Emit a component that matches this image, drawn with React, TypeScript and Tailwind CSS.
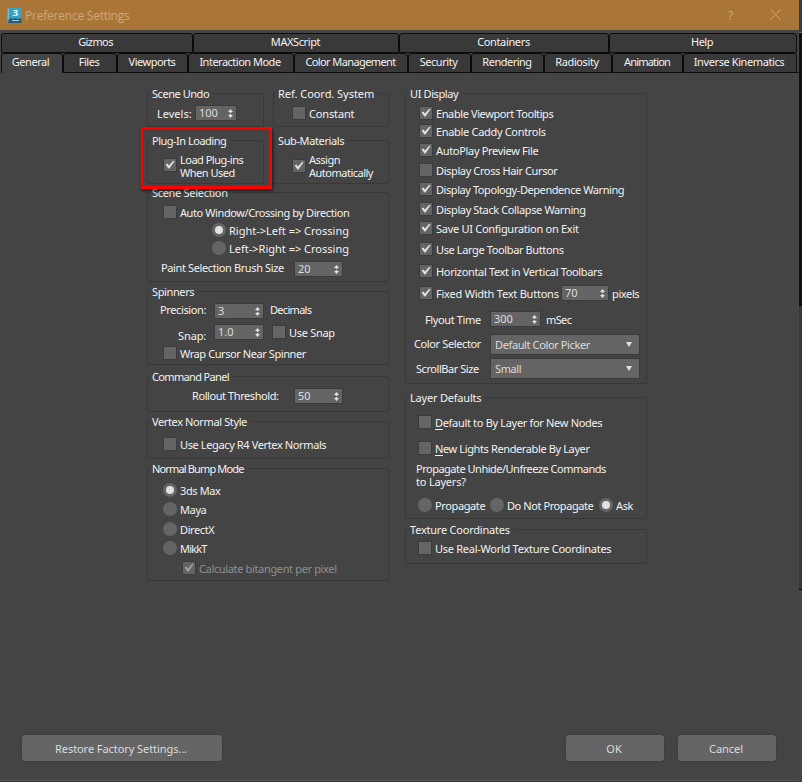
import type { ReactNode } from "react";

const TopTabs = [
    { name: "Gizmos", width: "w-[192px]", fit: "pr-[3px] tracking-[-0.6px]" },
    { name: "MAXScript", width: "w-[206px]", fit: "pr-[1px] tracking-[-0.4px]" },
    { name: "Containers", width: "w-[210px]", fit: "pr-[1px] tracking-[-0.35px]" },
    { name: "Help", width: "w-[188px]", fit: "pr-[2px] tracking-[-0.5px]" },
];

const BottomTabs = [
    { name: "General", width: "w-[62px]", fit: "pr-[3px] tracking-[-0.43px]" },
    { name: "Files", width: "w-[54px]", fit: "pr-[2px] tracking-[-0.5px]" },
    { name: "Viewports", width: "w-[71px]", fit: "pr-[1px] tracking-[-0.5px]" },
    { name: "Interaction Mode", width: "w-[106px]", fit: "pr-[2px] tracking-[-0.5px]" },
    { name: "Color Management", width: "w-[114px]", fit: "pr-[1px] tracking-[-0.6px]" },
    { name: "Security", width: "w-[63px]", fit: "pr-[2px] tracking-[-0.45px]" },
    { name: "Rendering", width: "w-[73px]", fit: "pr-[1px] tracking-[-0.5px]" },
    { name: "Radiosity", width: "w-[68px]", fit: "pr-[2px] tracking-[-0.4px]" },
    { name: "Animation", width: "w-[71px]", fit: "pr-[1px] tracking-[-0.8px]" },
    { name: "Inverse Kinematics", width: "w-[114px]", fit: "pr-[2px] tracking-[-0.4px]" },
];

type TabProps = { name: string; width: string; fit: string; active?: boolean };

const Tab = ({ name, width, fit, active }: TabProps) => (
    <button
        className={`${width} ${fit} shrink-0 border-t border-x border-[#0c0c0c] rounded-t-[3px] text-center ${active ? "pb-[3px] bg-[#444444]" : "pb-[2px] bg-[#393939] border-b"}`}
    >
        {name}
    </button>
);

type GroupProps = { title: string; fit?: string; className: string; children: ReactNode };

const Group = ({ title, fit = "", className, children }: GroupProps) => (
    <section className={`flex flex-col border border-[#383838] rounded-[2px] ${className}`}>
        <h2 className={`-mt-2 ml-[2px] h-4 w-fit pl-[2px] pr-1 leading-4 bg-[#444444] ${fit}`}>{title}</h2>
        {children}
    </section>
);

const Row = ({ className = "", children }: { className?: string; children: ReactNode }) => (
    <div className={`flex items-center h-4 ${className}`}>{children}</div>
);

// row text sits a pixel below the centre of its control
const Label = ({ className = "", children }: { className?: string; children: ReactNode }) => (
    <span className={`pt-[2px] ${className}`}>{children}</span>
);

const Check = ({ on, dim, className = "" }: { on?: boolean; dim?: boolean; className?: string }) => (
    <span
        className={`w-[14px] h-[14px] shrink-0 mr-[3px] border border-[#3b3b3b] bg-[#646464] ${className}`}
    >
        {on && (
            <svg viewBox="0 0 12 12" className="w-3 h-3" fill={dim ? "#a0a0a0" : "#e0e0e0"}>
                <path d="M1.6 5.6 L3.4 4.6 L5 6.6 L9.2 1.8 L10.6 2.2 L5.4 9.6 L4.4 9.6 Z" />
            </svg>
        )}
    </span>
);

const Radio = ({ on }: { on?: boolean }) => (
    <span className="w-[14px] h-[14px] shrink-0 mr-[3px] rounded-full bg-[#656565] flex items-center justify-center">
        {on && <span className="w-2 h-2 rounded-full bg-[#e2e2e2]" />}
    </span>
);

const Spinner = ({ value, className }: { value: string; className: string }) => (
    <span
        className={`flex items-center justify-between shrink-0 h-4 pl-[3px] pr-[3px] border border-[#3b3b3b] bg-[#646464] text-[#dcdcdc] tracking-normal ${className}`}
    >
        {value}
        <svg viewBox="0 0 5 9" className="w-[5px] h-[9px]" fill="#e0e0e0">
            <path d="M2.5 0 L5 3 H3.2 V4 H1.8 V3 H0 Z M2.5 9 L5 6 H3.2 V5 H1.8 V6 H0 Z" />
        </svg>
    </span>
);

const Combo = ({ value }: { value: string }) => (
    <span className="flex items-center justify-between w-[150px] h-[21px] shrink-0 pl-1 pr-[7px] border border-[#3b3b3b] bg-[#646464] text-[#dcdcdc]">
        <Label>{value}</Label>
        <svg viewBox="0 0 6 5" className="w-[6px] h-[5px]" fill="#e0e0e0">
            <path d="M0 0 H6 L3 5 Z" />
        </svg>
    </span>
);

const PushButton = ({ label, className }: { label: string; className: string }) => (
    <button
        className={`h-[28px] rounded-[4px] border border-[#3e3e3e] bg-[#656565] text-[#dcdcdc] pt-px pr-[2px] tracking-[-0.07px] ${className}`}
    >
        {label}
    </button>
);

const AppIcon = () => (
    <svg viewBox="0 0 15 17" className="w-[15px] h-[17px]">
        <path d="M0.5 2 L3 0.5 V13 L0.5 15.5 Z" fill="#7fb9c8" />
        <rect x="2" y="0.5" width="12.5" height="12.5" rx="1" fill="#35a3c4" />
        <path d="M2 11.5 H14.5 V16 H1 Z" fill="#255c78" />
        <path d="M5 13.5 H12" stroke="#a9cbd6" />
        <text x="8.3" y="9" textAnchor="middle" fontSize="9.5" fontWeight="700" fill="#e9f7fa">
            3
        </text>
    </svg>
);

const TitleBar = () => (
    <header className="flex items-center h-[30px] shrink-0 pl-[7px] bg-[#a97638] text-[#cfa878] font-['Open_Sans',sans-serif]">
        <AppIcon />
        <h1 className="ml-[3px] pt-[2px] text-[12px] tracking-[-0.22px]">Preference Settings</h1>
        <span className="ml-auto mr-[37px] pb-px text-[13px]">?</span>
        <svg viewBox="0 0 11 11" className="w-[11px] h-[11px] mr-[18px] mb-[2px]" stroke="#cfa878">
            <path d="M0.5 0.5 L10.5 10.5 M10.5 0.5 L0.5 10.5" />
        </svg>
    </header>
);

const displayOptions = [
    { label: "Enable Viewport Tooltips", on: true, gap: "mt-[3px]", fit: "tracking-[-0.4px]" },
    { label: "Enable Caddy Controls", on: true, gap: "mt-[2px]", fit: "tracking-[-0.32px]" },
    { label: "AutoPlay Preview File", on: true, gap: "mt-[3px]", fit: "tracking-[-0.32px]" },
    { label: "Display Cross Hair Cursor", on: false, gap: "mt-[4px]", fit: "tracking-[-0.38px]" },
    { label: "Display Topology-Dependence Warning", on: true, gap: "mt-[3px]", fit: "tracking-[-0.43px]" },
    { label: "Display Stack Collapse Warning", on: true, gap: "mt-[4px]", fit: "tracking-[-0.38px]" },
    { label: "Save UI Configuration on Exit", on: true, gap: "mt-[3px]", fit: "tracking-[-0.28px]" },
    { label: "Use Large Toolbar Buttons", on: true, gap: "mt-[5px]", fit: "tracking-[-0.38px]" },
    { label: "Horizontal Text in Vertical Toolbars", on: true, gap: "mt-[6px]", fit: "tracking-[-0.34px]" },
];

const LeftColumn = () => (
    <div className="w-[242px] flex flex-col">
        <div className="flex justify-between">
            <Group title="Scene Undo" fit="tracking-[-0.45px]" className="w-[117px] h-[34px]">
                <Row className="mt-[3px] pl-[9px]">
                    <Label className="w-[38px] tracking-normal">Levels:</Label>
                    <Spinner value="100" className="w-[42px]" />
                </Row>
            </Group>
            <Group title="Ref. Coord. System" fit="tracking-[-0.04px]" className="w-[116px] h-[34px]">
                <Row className="mt-[3px] pl-[18px]">
                    <Check />
                    <Label className="tracking-[-0.15px]">Constant</Label>
                </Row>
            </Group>
        </div>
        <div className="flex justify-between mt-[13px]">
            <div className="relative">
                <Group title="Plug-In Loading" fit="tracking-[-0.5px]" className="w-[117px] h-[44px]">
                    <div className="flex items-center h-[26px] mt-[4px] pl-[15px] leading-[13px] tracking-[-0.5px]">
                        <Check on className="-mt-[2px]" />
                        <span>
                            Load Plug-ins
                            <br />
                            When Used
                        </span>
                    </div>
                </Group>
                {/* callout frame around the plug-in options */}
                <div className="absolute -left-[6px] -top-[13px] w-[131px] h-[62px] border-2 border-b-3 border-[#ff0000] shadow-[1px_2px_3px_rgba(0,0,0,0.6)]" />
            </div>
            <Group title="Sub-Materials" className="w-[116px] h-[44px]">
                <div className="flex items-center h-[26px] mt-[4px] pl-[18px] leading-[13px] tracking-[-0.5px]">
                    <Check on />
                    <span>
                        Assign
                        <br />
                        Automatically
                    </span>
                </div>
            </Group>
        </div>
        <Group title="Scene Selection" fit="tracking-[-0.3px]" className="mt-[8px] h-[90px]">
            <Row className="mt-[3px] pl-[15px]">
                <Check />
                <Label className="tracking-[-0.41px]">Auto Window/Crossing by Direction</Label>
            </Row>
            <Row className="mt-[2px] pl-[64px] tracking-normal">
                <Radio on />
                <Label>Right-&gt;Left =&gt; Crossing</Label>
            </Row>
            <Row className="mt-[2px] pl-[64px] tracking-normal">
                <Radio />
                <Label>Left-&gt;Right =&gt; Crossing</Label>
            </Row>
            <Row className="mt-[5px] pl-[13px]">
                <span className="w-[133px] pb-[2px]">Paint Selection Brush Size</span>
                <Spinner value="20" className="w-[49px]" />
            </Row>
        </Group>
        <Group title="Spinners" className="mt-[9px] h-[74px]">
            <Row className="mt-[3px] pl-[12px]">
                <span className="w-[54px] pb-[2px]">Precision:</span>
                <Spinner value="3" className="w-[50px]" />
                <span className="ml-[6px] pb-[2px] tracking-[-0.7px]">Decimals</span>
            </Row>
            <Row className="mt-[5px] pl-[30px]">
                <span className="w-[36px] pt-2 tracking-[-0.1px]">Snap:</span>
                <Spinner value="1.0" className="w-[50px]" />
                <Check className="ml-[8px]" />
                <Label className="tracking-[-0.3px]">Use Snap</Label>
            </Row>
            <Row className="mt-[5px] pl-[15px]">
                <Check />
                <Label className="tracking-[-0.42px]">Wrap Cursor Near Spinner</Label>
            </Row>
        </Group>
        <Group title="Command Panel" fit="tracking-[-0.65px]" className="mt-[11px] h-[36px]">
            <Row className="mt-[3px] pl-[44px]">
                <span className="w-[102px] tracking-[-0.42px]">Rollout Threshold:</span>
                <Spinner value="50" className="w-[49px]" />
            </Row>
        </Group>
        <Group title="Vertex Normal Style" className="mt-[9px] h-[38px]">
            <Row className="mt-[6px] pl-[15px]">
                <Check />
                <Label>Use Legacy R4 Vertex Normals</Label>
            </Row>
        </Group>
        <Group title="Normal Bump Mode" fit="tracking-[-0.85px]" className="mt-[9px] h-[113px]">
            <Row className="mt-[5px] pl-[15px]">
                <Radio on />
                <Label>3ds Max</Label>
            </Row>
            <Row className="mt-[3px] pl-[15px]">
                <Radio />
                <Label>Maya</Label>
            </Row>
            <Row className="mt-[4px] pl-[15px]">
                <Radio />
                <Label>DirectX</Label>
            </Row>
            <Row className="mt-[3px] pl-[15px]">
                <Radio />
                <Label className="tracking-[-0.8px]">MikkT</Label>
            </Row>
            <Row className="mt-[4px] pl-[34px] text-[#8f8f8f]">
                <Check on dim />
                <Label className="tracking-[-0.35px]">Calculate bitangent per pixel</Label>
            </Row>
        </Group>
    </div>
);

const RightColumn = () => (
    <div className="w-[242px] flex flex-col">
        <Group title="UI Display" className="h-[291px]">
            {displayOptions.map((option) => (
                <Row key={option.label} className={`pl-[13px] ${option.gap}`}>
                    <Check on={option.on} />
                    <Label className={option.fit}>{option.label}</Label>
                </Row>
            ))}
            <Row className="mt-[6px] pl-[13px]">
                <Check on />
                <Label className="w-[125px] tracking-[-0.22px]">Fixed Width Text Buttons</Label>
                <Spinner value="70" className="w-[48px]" />
                <Label className="ml-[3px]">pixels</Label>
            </Row>
            <Row className="mt-[10px] pl-[19px]">
                <Label className="w-[65px]">Flyout Time</Label>
                <Spinner value="300" className="w-[51px]" />
                <Label className="ml-[5px] tracking-[-0.6px]">mSec</Label>
            </Row>
            <Row className="mt-[9px] pl-[8px]">
                <span className="w-[76px]">Color Selector</span>
                <Combo value="Default Color Picker" />
            </Row>
            <Row className="mt-[8px] pl-[10px]">
                <Label className="w-[74px] tracking-[-0.45px]">ScrollBar Size</Label>
                <Combo value="Small" />
            </Row>
        </Group>
        <Group title="Layer Defaults" fit="tracking-[-0.2px]" className="mt-[13px] h-[122px]">
            <Row className="mt-[8px] pl-[12px]">
                <Check />
                <Label className="tracking-[-0.32px]">
                    <u className="underline-offset-2">D</u>efault to By Layer for New Nodes
                </Label>
            </Row>
            <Row className="mt-[10px] pl-[12px]">
                <Check />
                <Label>
                    <u className="underline-offset-2">N</u>ew Lights Renderable By Layer
                </Label>
            </Row>
            <p className="mt-[6px] pl-[10px] leading-[13px] tracking-[-0.5px]">
                Propagate Unhide/Unfreeze Commands
                <br />
                <span className="tracking-[-0.2px]">to Layers?</span>
            </p>
            <Row className="mt-[9px] pl-[12px]">
                <Radio />
                <Label className="w-[55px]">Propagate</Label>
                <Radio />
                <Label className="w-[92px] tracking-[-0.42px]">Do Not Propagate</Label>
                <Radio on />
                <Label>Ask</Label>
            </Row>
        </Group>
        <Group title="Texture Coordinates" fit="tracking-[-0.22px]" className="mt-[10px] h-[35px]">
            <Row className="mt-[2px] pl-[12px]">
                <Check />
                <Label className="tracking-[-0.27px]">Use Real-World Texture Coordinates</Label>
            </Row>
        </Group>
    </div>
);

// sliver of the main window that shows past the dialog's right edge
const Backdrop = () => (
    <div className="flex flex-col flex-1 bg-[#464646]">
        <div className="h-[32px] bg-[#3b3b3b]" />
        <div className="h-px bg-[#7a6420]" />
        <div className="h-[273px] bg-[#0f0f0f]" />
        <div className="h-[283px] bg-[#383838]" />
        <div className="h-px bg-black" />
    </div>
);

const App = () => {
    return (
        <div className="flex w-[802px] h-[782px] overflow-hidden bg-[#3a3236] text-[#f2f2f2] text-[11px] leading-4 tracking-[-0.38px] whitespace-nowrap font-['Noto_Sans',sans-serif]">
            <div className="flex flex-col w-[799px] h-[781px] bg-[#444444] border-b border-[#555555]">
                <TitleBar />
                <nav className="pt-[3px] pl-px">
                    <div className="flex h-[20px]">
                        {TopTabs.map((tab) => (
                            <Tab key={tab.name} {...tab} />
                        ))}
                    </div>
                    <div className="flex h-[20px]">
                        {BottomTabs.map((tab) => (
                            <Tab key={tab.name} {...tab} active={tab.name === "General"} />
                        ))}
                        <div className="flex-1 border-b border-[#0c0c0c]" />
                    </div>
                </nav>
                <main className="flex gap-[16px] pl-[147px] pt-[20px]">
                    <LeftColumn />
                    <RightColumn />
                </main>
                <footer className="flex mt-auto mb-[18px] pl-[21px]">
                    <PushButton label="Restore Factory Settings..." className="w-[202px]" />
                    <PushButton label="OK" className="w-[100px] ml-[342px]" />
                    <PushButton label="Cancel" className="w-[100px] ml-[12px]" />
                </footer>
            </div>
            <Backdrop />
        </div>
    );
};

export default App;
